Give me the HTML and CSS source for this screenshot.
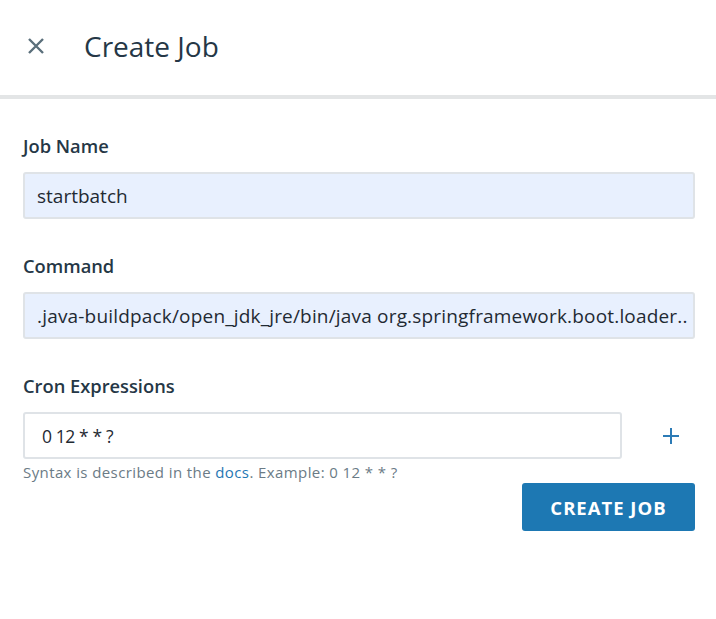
FILE: index.html
```html
<!DOCTYPE html>
<html>
<head>
<meta charset="utf-8">
<link rel="stylesheet" href="styles.css">
</head>
<body>
<div class="page">
  <header class="header">
    <svg class="close" width="18" height="18" viewBox="0 0 18 18"><path d="M2 2L16 16M16 2L2 16" stroke="#5b6f7b" stroke-width="2.4" fill="none"/></svg>
    <h1 class="title">Create Job</h1>
  </header>
  <main class="form">
    <div class="field">
      <label class="label">Job Name</label>
      <div class="input filled">startbatch</div>
    </div>
    <div class="field">
      <label class="label">Command</label>
      <div class="input filled cmd">.java-buildpack/open_jdk_jre/bin/java org.springframework.boot.loader..</div>
    </div>
    <div class="field last">
      <label class="label">Cron Expressions</label>
      <div class="cron-row">
        <div class="input plain">0 12 * * ?</div>
        <svg class="plus" width="18" height="18" viewBox="0 0 18 18"><path d="M9 1V17M1 9H17" stroke="#2c7bb6" stroke-width="2" fill="none"/></svg>
      </div>
      <p class="help">Syntax is described in the <a class="link">docs</a>. Example: 0 12 * * ?</p>
    </div>
    <div class="actions">
      <button class="btn">CREATE JOB</button>
    </div>
  </main>
</div>
</body>
</html>
```
FILE: styles.css
```css
* { box-sizing: border-box; }
html, body { margin: 0; padding: 0; background: #fff; }
body { font-family: "Open Sans", "Liberation Sans", sans-serif; color: #253746; }
.header {
  height: 99px;
  display: flex;
  align-items: center;
  padding: 0 0 4px 27px;
  border-bottom: 4px solid #e3e5e6;
}
.close { display: block; margin-right: 39px; }
.title { margin: 0; font-size: 28px; font-weight: 400; color: #253746; line-height: 36px; }
.form { padding: 36px 21px 0 23px; }
.field { display: flex; flex-direction: column; margin-bottom: 36px; }
.field.last { margin-bottom: 0; }
.label { font-size: 18.3px; font-weight: 600; color: #253746; margin-bottom: 15px; line-height: 22px; }
.input {
  height: 47px;
  border: 2px solid #dfe3e7;
  border-radius: 3px;
  padding: 0 12px;
  font-size: 19px;
  display: flex;
  align-items: center;
  color: #1f2a33;
  white-space: nowrap;
  overflow: hidden;
}
.filled { background: #e8f0fe; }
.cmd { letter-spacing: 0.18px; padding-right: 0; }
.plain { background: #fff; width: 599px; padding-left: 17px; font-size: 17.5px; letter-spacing: -0.4px; }
.cron-row { display: flex; align-items: center; }
.plus { margin-left: 40px; }
.help { margin: 4px 0 0; font-size: 15px; color: #6b7b86; line-height: 18px; letter-spacing: 0.4px; }
.link { color: #1f77b4; }
.actions { display: flex; justify-content: flex-end; margin-top: 2px; }
.btn {
  width: 173px;
  height: 48px;
  background: #1d78b3;
  color: #fff;
  border: none;
  border-radius: 3px;
  font-family: "Open Sans", sans-serif;
  font-size: 18.5px;
  font-weight: 700;
  letter-spacing: 1px;
  padding: 0;
}
```
